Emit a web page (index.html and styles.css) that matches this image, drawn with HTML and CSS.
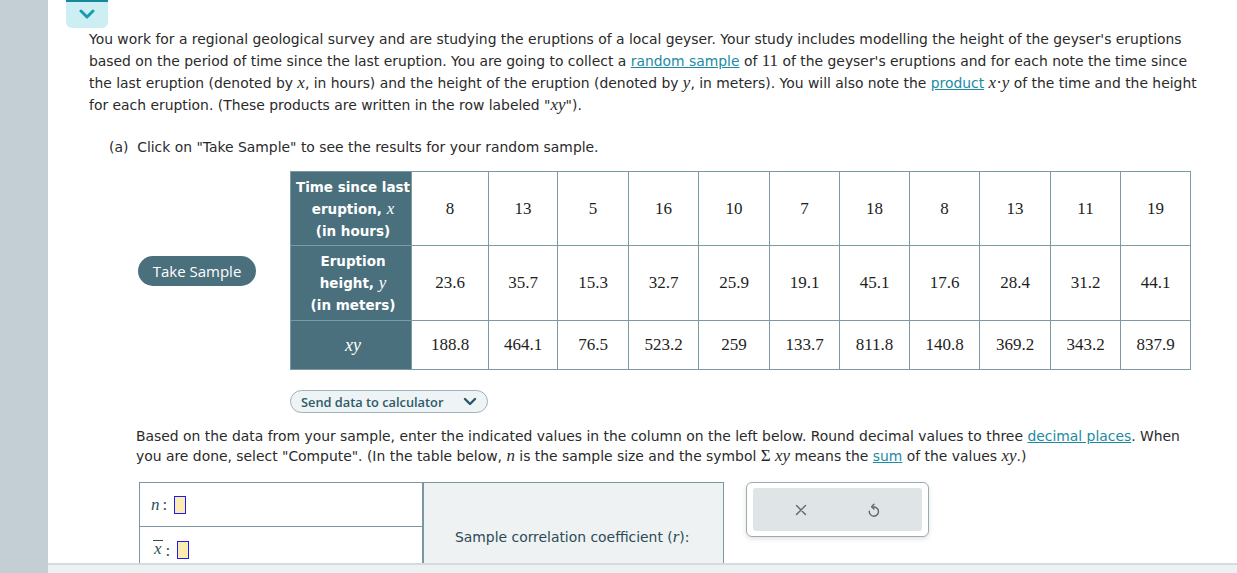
FILE: index.html
```html
<!DOCTYPE html>
<html lang="en">
<head>
<meta charset="utf-8">
<title>Geyser sample</title>
<link rel="stylesheet" href="styles.css">
</head>
<body>
<div class="app">
  <aside class="side"></aside>
  <div class="main">
    <div class="scroll">
      <div class="tab">
        <svg width="16" height="10" viewBox="0 0 16 10"><polyline points="2,2 8,8 14,2" fill="none" stroke="#1a9ab3" stroke-width="3" stroke-linecap="round" stroke-linejoin="round"/></svg>
      </div>
      <p class="intro">You work for a regional geological survey and are studying the eruptions of a local geyser. Your study includes modelling the height of the geyser's eruptions based on the period of time since the last eruption. You are going to collect a <a href="#">random sample</a> of <span class="m">11</span> of the geyser's eruptions and for each note the time since the last eruption (denoted by <span class="m i">x</span>, in hours) and the height of the eruption (denoted by <span class="m i">y</span>, in meters). You will also note the <a href="#">product</a> <span class="m i">x</span><span class="m">·</span><span class="m i">y</span> of the time and the height for each eruption. (These products are written in the row labeled "<span class="m i">xy</span>").</p>
      <p class="part">(a)&nbsp; Click on "Take Sample" to see the results for your random sample.</p>
      <div class="sample">
        <div class="btnwrap"><button class="take">Take Sample</button></div>
        <table class="data">
          <colgroup>
            <col class="c0"><col class="c1"><col class="c2"><col class="c3"><col class="c4"><col class="c5"><col class="c6"><col class="c7"><col class="c8"><col class="c9"><col class="c10"><col class="c11">
          </colgroup>
          <tr class="r1">
            <th>Time since last<br>eruption, <span class="m i">x</span><br>(in hours)</th>
            <td>8</td><td>13</td><td>5</td><td>16</td><td>10</td><td>7</td><td>18</td><td>8</td><td>13</td><td>11</td><td>19</td>
          </tr>
          <tr class="r2">
            <th>Eruption<br>height, <span class="m i">y</span><br>(in meters)</th>
            <td>23.6</td><td>35.7</td><td>15.3</td><td>32.7</td><td>25.9</td><td>19.1</td><td>45.1</td><td>17.6</td><td>28.4</td><td>31.2</td><td>44.1</td>
          </tr>
          <tr class="r3">
            <th><span class="m i big">xy</span></th>
            <td>188.8</td><td>464.1</td><td>76.5</td><td>523.2</td><td>259</td><td>133.7</td><td>811.8</td><td>140.8</td><td>369.2</td><td>343.2</td><td>837.9</td>
          </tr>
        </table>
      </div>
      <div class="sendrow">
        <button class="send">Send data to calculator
          <svg width="14" height="10" viewBox="0 0 14 10"><polyline points="2,2 7,7 12,2" fill="none" stroke="#2d5766" stroke-width="2.4" stroke-linecap="round" stroke-linejoin="round"/></svg>
        </button>
      </div>
      <p class="instr">Based on the data from your sample, enter the indicated values in the column on the left below. Round decimal values to three <a href="#">decimal places</a>. When you are done, select "Compute". (In the table below, <span class="m i">n</span> is the sample size and the symbol <span class="m">Σ</span> <span class="m i">xy</span> means the <a href="#">sum</a> of the values <span class="m i">xy</span>.)</p>
      <div class="answer">
        <div class="grid">
          <div class="left">
            <div class="arow"><span class="m i lbl">n</span><span class="colon">:</span><span class="box"></span></div>
            <div class="arow arow2"><span class="m i lbl bar">x</span><span class="colon">:</span><span class="box"></span></div>
          </div>
          <div class="mid">Sample correlation coefficient (<span class="m i">r</span>):</div>
        </div>
        <div class="tools">
          <div class="toolin">
            <svg width="14" height="14" viewBox="0 0 14 14"><path d="M2.5 2.5 L11.5 11.5 M11.5 2.5 L2.5 11.5" stroke="#5d676b" stroke-width="1.4" fill="none" stroke-linecap="round"/></svg>
            <svg width="14" height="16" viewBox="0 0 14 16"><path d="M6.5 5 A4.6 4.6 0 1 1 2.3 9.2" stroke="#5d676b" stroke-width="1.4" fill="none" stroke-linecap="round"/><polyline points="7,2.2 4.6,4.8 7,7" stroke="#5d676b" stroke-width="1.4" fill="none" stroke-linecap="round" stroke-linejoin="round"/></svg>
          </div>
        </div>
      </div>
    </div>
    <div class="foot"></div>
  </div>
</div>
</body>
</html>
```
FILE: styles.css
```css
* { box-sizing: border-box; }
html, body { margin: 0; padding: 0; }
body {
  font-family: "DejaVu Sans", Verdana, sans-serif;
  font-size: 13.9px;
  color: #2a2a2a;
  background: #fff;
  width: 1237px;
  height: 573px;
  overflow: hidden;
}
.app { display: flex; height: 573px; }
.side { width: 48px; flex: none; background: #c3cfd5; }
.main { flex: 1; display: flex; flex-direction: column; min-width: 0; }
.scroll { height: 563px; overflow: hidden; }
.foot { height: 10px; background: #eef1f2; border-top: 2px solid #d5dcdf; }

.tab {
  margin-left: 18px;
  width: 42px;
  height: 28px;
  background: #cdeef3;
  border-top: 2px solid #16889e;
  border-radius: 0 0 6px 6px;
  display: flex;
  align-items: center;
  justify-content: center;
}
.tab svg { display: block; margin-top: -2px; }

a { color: #1c8ba2; text-decoration: underline; }
.m { font-family: "Liberation Serif", "Times New Roman", serif; font-size: 17px; }
.i { font-style: italic; }

.intro {
  margin: 0;
  padding: 0 27px 0 41px;
  line-height: 22px;
}
.part {
  margin: 20px 0 0 61px;
  line-height: 22px;
}
.sample {
  display: flex;
  align-items: center;
  margin-top: 13px;
}
.btnwrap { padding-left: 90px; width: 242px; flex: none; }
.take {
  width: 118px;
  height: 30px;
  border: none;
  border-radius: 15px;
  background: #4a6f7d;
  color: #fff;
  font-family: "Open Sans", "Noto Sans", sans-serif;
  font-size: 15px;
  padding: 0;
}
.data {
  border-collapse: collapse;
  table-layout: fixed;
  width: 901px;
}
.data col.c0 { width: 121px; }
.data col.c1 { width: 77px; }
.data col.c2 { width: 69px; }
.data col.c3 { width: 71px; }
.data col.c4 { width: 70px; }
.data col.c5 { width: 71px; }
.data col.c6 { width: 70px; }
.data col.c7 { width: 70px; }
.data col.c8 { width: 70px; }
.data col.c9 { width: 71px; }
.data col.c10 { width: 70px; }
.data col.c11 { width: 70px; }
.data th, .data td { border: 1px solid #7b9aa4; text-align: center; padding: 0; }
.data th {
  background: #4a6f7d;
  color: #fff;
  font-weight: bold;
  font-size: 13.5px;
  white-space: nowrap;
  line-height: 22px;
  padding: 3px 0 3px 4px;
}
.data th .m { font-weight: normal; }
.data td {
  font-family: "Liberation Serif", "Times New Roman", serif;
  font-size: 17px;
  color: #1e1e1e;
}
.data tr.r1 { height: 74px; }
.data tr.r2 { height: 75px; }
.data tr.r3 { height: 49px; }
.big { font-size: 18px; }

.sendrow { margin: 20px 0 0 242px; }
.send {
  display: inline-flex;
  align-items: center;
  gap: 20px;
  height: 23px;
  padding: 0 10px 0 10px;
  border: 1px solid #9fb3ba;
  border-radius: 12px;
  background: #eef3f5;
  color: #2f5a69;
  font-family: "Open Sans", "Noto Sans", sans-serif;
  font-weight: 600;
  font-size: 12.8px;
}
.send svg { display: block; }

.instr {
  margin: 13px 37px 0 88px;
  line-height: 20px;
}
.answer {
  display: flex;
  align-items: flex-start;
  margin: 16px 0 0 91px;
}
.grid {
  display: flex;
  border: 1px solid #7b979f;
  border-bottom: none;
  height: 90px;
}
.left { width: 284px; border-right: 2px solid #7b979f; }
.arow {
  height: 43px;
  display: flex;
  align-items: center;
  padding-left: 11px;
  color: #2f4f5a;
}
.arow2 {
  border-top: 1px solid #7b979f;
  height: 46px;
  padding-left: 13px;
  align-items: flex-start;
  padding-top: 14px;
}
.lbl { font-size: 17px; color: #2f4f5a; }
.bar { display: inline-block; line-height: 16px; border-top: 1.5px solid #2f4f5a; padding: 0 1px; margin-top: -1px; }
.colon { font-family: "Liberation Serif", serif; font-size: 17px; margin: 0 7px 0 3px; }
.box {
  width: 12px;
  height: 18px;
  background: #fdecb1;
  border: 1px solid #1a1aff;
}
.mid {
  width: 299px;
  background: #eef2f3;
  color: #2c4a55;
  padding: 44px 0 0 31px;
  line-height: 20px;
}
.tools {
  margin-left: 22px;
  width: 183px;
  height: 55px;
  border: 1px solid #9aabb2;
  border-radius: 6px;
  background: #fff;
  padding: 5px 6px;
  box-shadow: 0 2px 5px rgba(0,0,0,0.12);
}
.toolin {
  height: 43px;
  background: #dfe5e7;
  border-radius: 3px;
  display: flex;
  align-items: center;
  justify-content: space-around;
  padding: 0 12px;
}
.toolin svg { display: block; }
```
